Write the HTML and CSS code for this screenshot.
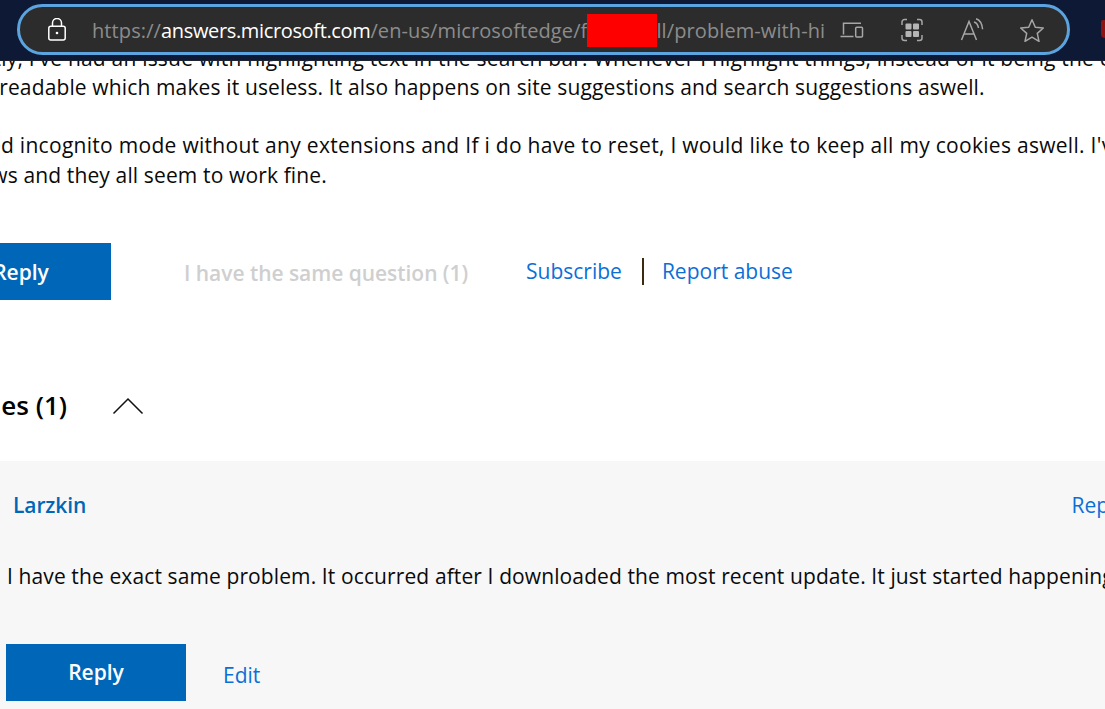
FILE: index.html
```html
<!DOCTYPE html>
<html lang="en">
<head>
<meta charset="utf-8">
<title>Problem with highlighting</title>
<link rel="stylesheet" href="styles.css">
</head>
<body>
<header class="chrome">
  <div class="urlbar">
    <svg class="lock" width="18" height="23" viewBox="0 0 18 23" fill="none" stroke="#fff" stroke-width="1.500"><path d="M4.500 8.300V5a4.500 4.500 0 0 1 9 0v3.300"/><rect x="0.800" y="8.300" width="16.400" height="13.700" rx="2"/><circle cx="9" cy="15" r="1.300" fill="#fff" stroke="none"/></svg>
    <div class="url"><span>https://</span><b>answers.microsoft.com</b><span>/en-us/microsoftedge/f</span><i class="redact"></i><span>ll/problem-with-hi</span></div>
    <div class="tools">
      <svg width="24" height="20" viewBox="0 0 24 20" fill="none" stroke="#a6a6a6" stroke-width="1.500"><path d="M3.500 14.500V3.200h17.500"/><path d="M0.500 16.500h13"/><rect x="15.700" y="7.200" width="6.800" height="9.800" rx="1"/></svg>
      <svg width="24" height="24" viewBox="0 0 24 24" fill="none" stroke="#a6a6a6" stroke-width="1.500"><path d="M2 7V4a2.500 2.500 0 0 1 2.500-2.500H7M17 1.500h2.500A2.500 2.500 0 0 1 22 4v3M22 17v3a2.500 2.500 0 0 1-2.500 2.500H17M7 22.500H4.500A2.500 2.500 0 0 1 2 20v-3"/><g fill="#b4b4b4" stroke="none"><rect x="5.500" y="5.500" width="6" height="6" rx="1"/><rect x="13" y="5.500" width="6" height="6" rx="1"/><rect x="5.500" y="13" width="6" height="6" rx="1"/><rect x="13" y="13" width="6" height="6" rx="1"/></g></svg>
      <svg width="24" height="24" viewBox="0 0 24 24" fill="none" stroke="#a6a6a6" stroke-width="1.500"><path d="M1.500 22L9 3.500 16.500 22M3.800 16h10.400"/><path d="M14 4c2.500.7 4 2.800 4.500 6M16 .8c3.500 1 6 4.500 6.600 10.500"/></svg>
      <svg class="star" width="26" height="24" viewBox="0 0 26 24" fill="none" stroke="#a6a6a6" stroke-width="1.500"><path d="M13 1.800l3.300 7.400 8 .8-6 5.400 1.700 7.900-7-4.100-7 4.100 1.700-7.900-6-5.400 8-.8z" stroke-linejoin="round"/></svg>
    </div>
  </div>
  <div class="shield"></div>
</header>
<main class="page">
  <section class="question">
    <p><span class="line l1">Recently, I've had an issue with highlighting text in the search bar. Whenever I highlight things, instead of it being the color it should be, it</span><span class="line l2">is unreadable which makes it useless. It also happens on site suggestions and search suggestions aswell.</span></p>
    <p><span class="line l3">I've tried incognito mode without any extensions and If i do have to reset, I would like to keep all my cookies aswell. I've tried</span><span class="line l4">other windows and they all seem to work fine.</span></p>
  </section>
  <div class="actions">
    <button class="btn">Reply</button>
    <span class="same">I have the same question (1)</span>
    <a class="link subscribe">Subscribe</a>
    <a class="link abuse">Report abuse</a>
  </div>
  <div class="replies">
    <h2>Replies (1)</h2>
    <svg class="chev" width="32" height="18" viewBox="0 0 32 18" fill="none" stroke="#111" stroke-width="1.500"><path d="M1.500 16.500L16 2l14.500 14.500"/></svg>
  </div>
  <section class="answer">
    <div class="answer-head">
      <a class="author">Larzkin</a>
      <a class="link rep">Reply</a>
    </div>
    <p class="answer-text">I have the exact same problem. It occurred after I downloaded the most recent update. It just started happening to me and I have no idea how to fix it.</p>
    <div class="answer-actions">
      <button class="btn btn-raised">Reply</button>
      <a class="link edit">Edit</a>
    </div>
  </section>
</main>
</body>
</html>
```
FILE: styles.css
```css
* { box-sizing: border-box; }
html, body { margin: 0; height: 100%; overflow: hidden; background: #fff; }
body { width: 1105px; height: 709px; font-family: "Open Sans", "Noto Sans", sans-serif; color: #0a0a0a; display: flex; flex-direction: column; }
.chrome { height: 61px; flex: none; background: #0e1a35; padding: 4px 0 0 17px; display: flex; align-items: flex-start; position: relative; z-index: 2; border-bottom: 1px solid #1c2433; }
.urlbar { width: 1053px; height: 51px; background: #2c2c2c; border: 3px solid #5ba4df; border-radius: 26px; display: flex; align-items: center; padding: 0 20px 0 28px; overflow: hidden; }
.lock { flex: none; }
.url { margin: 2px 0 0 26px; width: 734px; white-space: nowrap; overflow: hidden; font-size: 20px; color: #8c8c8c; display: flex; align-items: center; letter-spacing: 0.1px; flex: none; }
.url b { font-weight: 400; color: #fff; letter-spacing: -0.35px; }
.redact { display: block; flex: none; width: 70px; height: 33px; background: #f00; margin-right: -1px; }
.tools { display: flex; align-items: center; gap: 36px; margin-left: 14px; flex: none; }
.star { margin-left: -1px; }
.shield { position: absolute; right: 0; top: 20px; width: 4px; height: 18px; background: #8e1414; border-radius: 3px 0 0 6px; }
.page { flex: 1; min-height: 0; overflow: hidden; }
.question { margin: -17px 0 0; width: 1300px; font-size: 21px; line-height: 29.3px; letter-spacing: 0.135px; }
.question p { margin: 0 0 28.6px; white-space: nowrap; }
.line { display: block; }
.l1 { margin-left: -67px; letter-spacing: 0.2px; }
.l2 { margin-left: -48px; }
.l3 { margin-left: -73px; letter-spacing: 0.29px; }
.l4 { margin: 0.5px 0 0 -129px; }
.actions { display: flex; align-items: center; height: 57px; margin: 53px 0 0 -69px; }
.btn { width: 180px; height: 57px; border: 0; background: #0067b8; color: #fff; font: 600 21px "Open Sans", sans-serif; padding: 0; flex: none; }
.btn-raised { padding-bottom: 2px; }
.same { margin: 2px 0 0 73px; font-size: 21px; font-weight: 600; color: #cfcfcf; white-space: nowrap; letter-spacing: -0.04px; }
.link { color: #0b6fd8; font-size: 21px; white-space: nowrap; }
.subscribe { margin: -1px 0 0 58px; padding-right: 20px; border-right: 2px solid #3a2a10; line-height: 27px; }
.abuse { margin: -1px 0 0 18px; }
.replies { display: flex; align-items: center; margin: 85px 0 0 -61px; height: 40px; }
.replies h2 { margin: 0; font-size: 26px; font-weight: 600; color: #000; white-space: nowrap; }
.chev { margin-left: 45px; margin-top: 1px; }
.answer { margin-top: 36px; height: 260px; background: #f7f7f7; padding-top: 27px; }
.answer-head { display: flex; justify-content: space-between; padding-left: 13px; height: 34px; align-items: center; margin-right: -20px; }
.author { color: #0067b8; font-size: 21px; font-weight: 600; letter-spacing: -0.1px; }
.answer-text { margin: 40px 0 0 7px; width: 1200px; font-size: 21px; line-height: 29px; letter-spacing: 0.11px; white-space: nowrap; }
.answer-actions { display: flex; align-items: center; gap: 37px; margin: 53px 0 0 6px; }
.edit { margin-top: 4px; }
```
